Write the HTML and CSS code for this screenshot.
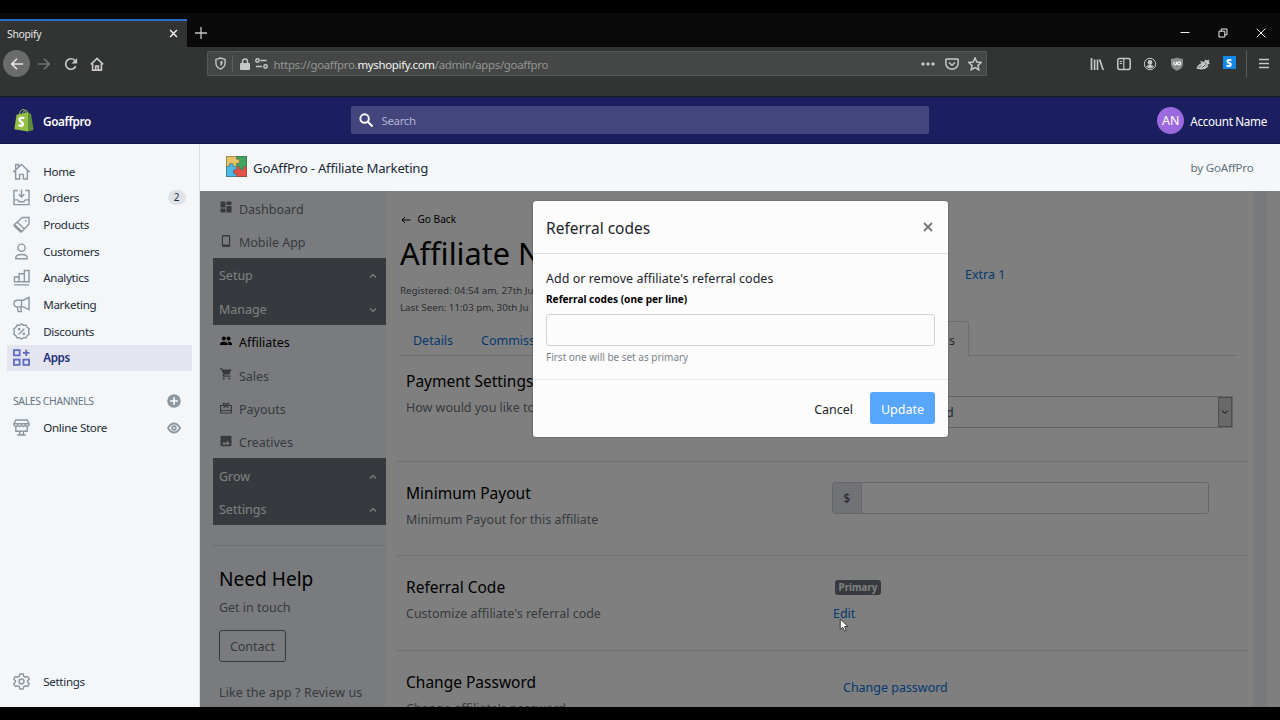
FILE: index.html
```html
<!DOCTYPE html>
<html lang="en">
<head>
<meta charset="utf-8">
<title>Shopify</title>
<link rel="stylesheet" href="styles.css">
</head>
<body>
<div class="screen">
  <div class="tabstrip">
    <div class="tab"><span>Shopify</span><svg class="tab-x" viewBox="0 0 10 10"><path d="M1.2 1.2l7.6 7.6M8.8 1.2L1.2 8.8"/></svg></div>
    <svg class="new-tab" viewBox="0 0 12 12"><path d="M6 0v12M0 6h12"/></svg>
    <div class="win-controls">
      <svg viewBox="0 0 10 10"><path d="M.5 4.500h9"/></svg>
      <svg viewBox="0 0 10 10"><path d="M1 3.2h5.8V9H1zM3.2 3V1H9v5.8H7"/></svg>
      <svg viewBox="0 0 10 10"><path d="M.7.7l8.6 8.6M9.3.7L.7 9.3"/></svg>
    </div>
  </div>

  <div class="toolbar">
    <div class="nav-buttons">
      <span class="back"><svg viewBox="0 0 16 16"><path d="M15 8H2M8 2L2 8l6 6"/></svg></span>
      <svg class="dim" viewBox="0 0 16 16"><path d="M1 8h13M8 2l6 6-6 6"/></svg>
      <svg viewBox="0 0 16 16"><path d="M13.4 10.4A6 6 0 1 1 12.4 4"/><path d="M15 1v6.5H8.5z" class="solid"/></svg>
      <svg viewBox="0 0 16 16"><path d="M1 8.5L8 1.5l7 7M3 7.5V15h10V7.500M6.500 15v-4.500h3V15"/></svg>
    </div>
    <div class="urlbar">
      <svg class="shield" viewBox="0 0 12 14"><path d="M6 1l5 1.600v3.500c0 3.500-2 5.800-5 7-3-1.200-5-3.500-5-7V2.600z"/><path d="M6 4v6c1.500-1 2.300-2.300 2.300-4.300V4.600z" class="solid"/></svg>
      <i></i>
      <svg class="lock" viewBox="0 0 10 12"><path d="M2.500 5.500V3.500a2.500 2.500 0 0 1 5 0v2"/><rect x="0" y="5" width="10" height="7" rx="1" class="solid"/></svg>
      <svg class="perm" viewBox="0 0 14 11"><circle cx="2.500" cy="2.500" r="1.700"/><path d="M5.500 2.500H11.500M1 8.500h6"/><circle cx="10.500" cy="8.500" r="1.700"/></svg>
      <span class="url">https://goaffpro.<b>myshopify.com</b>/admin/apps/goaffpro</span>
      <svg class="dots" viewBox="0 0 14 4"><circle cx="2" cy="2" r="1.700"/><circle cx="7" cy="2" r="1.700"/><circle cx="12" cy="2" r="1.700"/></svg>
      <svg class="pocket" viewBox="0 0 14 12"><path d="M1.500 1h11q.6 0 .6.700v4a6.100 5.500 0 0 1-12.200 0v-4q0-.7.6-.7z"/><path d="M4 4.500l3 2.800 3-2.800"/></svg>
      <svg class="star" viewBox="0 0 14 14"><path d="M7 1l1.800 4 4.300.500-3.200 2.900.900 4.300L7 10.500l-3.800 2.200.9-4.300L.9 5.500 5.200 5z"/></svg>
    </div>
    <div class="ext">
      <svg viewBox="0 0 14 14"><path d="M1.500 1v12M4.600 2.500v10.500M7.500 2.500v10.500M9.600 2.500l3.600 10.500" stroke-width="1.700"/></svg>
      <svg viewBox="0 0 14 14"><rect x=".8" y="1.600" width="12.400" height="10.800" rx="1.800" class="thick"/><path d="M6.800 2v10M2.800 4.500h2.200M2.800 6.500h2.200"/></svg>
      <svg viewBox="0 0 14 14"><circle cx="7" cy="7" r="5.700" stroke-width="1"/><circle cx="7" cy="5.500" r="2.400" class="solid"/><path d="M3 9.300q4-2.500 8 0-4 4.400-8 0z" class="solid"/></svg>
      <svg viewBox="0 0 14 14" class="ublock"><path d="M7 .5q3 1.500 6 1.300v4.700c0 4-3 6-6 7.200-3-1.200-6-3.200-6-7.200V1.800Q4 2 7 .5z"/><path d="M4 4.800v2q0 1.200 1.200 1.200t1.200-1.200v-2" class="mark"/><circle cx="9" cy="6.400" r="1.500" class="mark"/></svg>
      <svg viewBox="0 0 14 14"><path d="M.3 11.500q1.500-4 5.200-5.200L4 3.700l3.900 1.200 1.600-2.400 1.500 1 2.200-1-.3 2.500 1 1.600-2.500 1.200 1.200 1.700-3.600 2.500-4 .5z" class="solid"/><path d="M2.500 10.500l3-2M6 11l3.500-3.500M8.500 5.500l2 1.500M9.500 10l1.500-1.500" class="cut"/></svg>
      <span class="s-ext">S</span>
      <i></i>
      <svg viewBox="0 0 12 12"><path d="M1 1.500h10M1 5.500h10M1 9.500h10"/></svg>
    </div>
  </div>

  <header class="topbar">
    <div class="brand">
      <svg viewBox="0 0 20 24"><path d="M5 7Q6 1.500 9 1.400 11.500 1 12 6M8 7q1-4.500 3.500-5Q13.500 2 14 5.500" fill="none" stroke="#8fae6a" stroke-width="1"/><path d="M2.500 6.800L14 4.200V23.500L.3 21.300z" fill="#94be46"/><path d="M14 4.200l3 1.700 2.700 16L14 23.500z" fill="#5d8d3c"/><path d="M10.300 10.200q-4.600-1.300-4.800 1.600c0 2.200 3.700 2.100 3.500 4.400q-.5 2.600-4.500.8" fill="none" stroke="#fff" stroke-width="2.300"/></svg>
      <span>Goaffpro</span>
    </div>
    <div class="search"><svg viewBox="0 0 14 14"><circle cx="5.400" cy="5.400" r="4.100"/><path d="M8.500 8.500l4.600 4.600"/></svg><span>Search</span></div>
    <div class="account"><b>AN</b><span>Account Name</span></div>
  </header>

  <div class="workspace">
    <aside class="sidebar">
      <a><svg viewBox="0 0 18 18"><path d="M1 9l8-7.500L17 9h-1.800v8H11v-5H7v5H2.800V9zM2.800 6.500V1.500h3v2.500"/></svg>Home</a>
      <a><svg viewBox="0 0 18 18"><path d="M5 1.500H1v15h16v-15h-4M1 11.500h4l1.500 2h5l1.500-2h4M9 .5v7.500M6 5.500l3 3 3-3"/></svg>Orders<em>2</em></a>
      <a><svg viewBox="0 0 18 18"><path d="M10 1.500h7v7l-7.500 8L1.500 9zM1.500 9l-.3 1.500 7.500 7M4.200 6.200l7.800 7.500"/><circle cx="13.500" cy="5" r=".3"/></svg>Products</a>
      <a><svg viewBox="0 0 18 18"><circle cx="9" cy="5" r="3.800"/><path d="M3 16.700q-.8-4.500 6-4.500t6 4.500z"/></svg>Customers</a>
      <a><svg viewBox="0 0 18 18"><path d="M1.500 13.500v-5h5v5zM6.500 13.500V5H12v8.500zM12 13.500v-12h5v12zM1 16.800h16"/></svg>Analytics</a>
      <a><svg viewBox="0 0 18 18"><path d="M17 1.500v13l-6-3H4.500a3.500 3.500 0 0 1 0-7H11zM9 4.500v7M4.500 11.500l1 5H9l-1-5"/></svg>Marketing</a>
      <a><svg viewBox="0 0 18 18"><path d="M9 1l2.200 1.400 2.600-.1 1.200 2.300 2.100 1.600-.6 2.800.6 2.800-2.100 1.600-1.200 2.300-2.600-.1L9 17l-2.200-1.400-2.600.1L3 13.400.9 11.800 1.500 9 .9 6.200 3 4.600l1.200-2.300 2.600.1zM6 12l6-6"/><circle cx="6.500" cy="6.500" r=".7"/><circle cx="11.500" cy="11.500" r=".7"/></svg>Discounts</a>
      <a class="active"><svg viewBox="0 0 18 18"><path d="M1 1.200h6v5.600H1zM1 11.200h6v5.600H1zM11 11.200h6v5.600h-6zM14 .800v6.700M10.500 4.200h7"/></svg>Apps</a>
      <div class="group"><span>SALES CHANNELS</span><svg viewBox="0 0 14 14"><circle cx="7" cy="7" r="6.800" fill="#8c979f"/><path d="M7 3.200v7.600M3.200 7h7.600" stroke="#fff" stroke-width="1.600"/></svg></div>
      <a><svg viewBox="0 0 18 18"><path d="M3 1h12l2 4v1.500q-2 3-4 0-2 3-4 0-2 3-4 0-2 3-4 0V5zM1 5h16M3 8.500V13h12V8.500M7 13v3.500M11 13v3.500M4.500 17h9"/></svg>Online Store<svg class="eye" viewBox="0 0 14 12"><path d="M1 6q2.500-4.500 6-4.500T13 6q-2.500 4.500-6 4.500T1 6z"/><circle cx="7" cy="6" r="1.800"/></svg></a>
      <a class="bottom"><svg viewBox="0 0 18 18"><path d="M7.300 1h3.400l.6 2.400 1.800 1 2.400-.7 1.700 2.900L15.500 8.300v1.400l1.700 1.700-1.700 2.900-2.400-.7-1.800 1-.6 2.400H7.300l-.6-2.400-1.800-1-2.400.7-1.700-2.900 1.700-1.700V8.300L.8 6.600l1.700-2.900 2.400.7 1.800-1z"/><circle cx="9" cy="9" r="2.600"/></svg>Settings</a>
    </aside>

    <main class="main">
      <div class="app-title">
        <svg viewBox="0 0 20 20"><path d="M0 0h10v10H0z" fill="#e8c468"/><path d="M10 0h10v10H10z" fill="#3fa55c"/><path d="M0 10h10v10H0z" fill="#4bb9e8"/><path d="M10 10h10v10H10z" fill="#e25347"/><circle cx="11" cy="5" r="2.200" fill="#e8c468"/><circle cx="5" cy="9" r="2.200" fill="#4bb9e8"/><circle cx="9" cy="15" r="2.200" fill="#e25347"/><circle cx="15" cy="11" r="2.200" fill="#3fa55c"/><path d="M.4.4h19.200v19.200H.4zM10 0v3q3-.5 3 2t-3 2v3H7q.5-3-2-3t-2 3H0M10 10h3q-.500 3 2 3t2-3h3M10 10v3q-3-.5-3 2t3 2v3" fill="none" stroke="#4b4a3e" stroke-width=".5"/></svg>
        <h2>GoAffPro - Affiliate Marketing</h2><span>by GoAffPro</span>
      </div>

      <div class="frame">
        <nav class="app-nav">
          <a><svg viewBox="0 0 12 12"><path d="M.5.500h5v6h-5zM6.500.500h5v3.500h-5zM.5 7.500h5v4h-5zM6.500 5h5v6.500h-5z"/></svg>Dashboard</a>
          <a><svg viewBox="0 0 12 12"><path d="M3 0h6q1.200 0 1.200 1.200v9.600Q10.200 12 9 12H3q-1.200 0-1.200-1.200V1.200Q1.800 0 3 0zM3 1.500v8h6v-8z" fill-rule="evenodd"/></svg>Mobile App</a>
          <a class="sect">Setup<svg viewBox="0 0 8 8"><path d="M1 5.500l3-3 3 3"/></svg></a>
          <a class="sect">Manage<svg viewBox="0 0 8 8"><path d="M1 2.500l3 3 3-3"/></svg></a>
          <a class="on"><svg viewBox="0 0 12 12"><circle cx="3.800" cy="3.600" r="2"/><circle cx="8.500" cy="3.600" r="2"/><path d="M0 10V8.500Q1.500 6.500 4 6.500t3.800 2V10zM8.500 10V8.500q0-1-.8-1.900 3.300-.2 4.300 1.900V10z"/></svg>Affiliates</a>
          <a><svg viewBox="0 0 12 12"><path d="M0 .3h2l.6 1.300H11.500L9.400 6.500H4.600L4 7.500h6.500v1.200H3Q2 8 2.700 7l.6-1.100L1.200 1.500H0z"/><circle cx="3.800" cy="10.500" r="1.100"/><circle cx="9.300" cy="10.500" r="1.100"/></svg>Sales</a>
          <a><svg viewBox="0 0 12 12"><path d="M.6 3.500h10.800v7.500H.6zM.6 8.500h10.800M6 3.500L3.500 6M6 3.500L8.500 6M6 3.500C5 .3 2.800.5 3.300 3.300M6 3.500C7 .3 9.200.5 8.700 3.300" fill="none" stroke="currentColor" stroke-width="1.200"/></svg>Payouts</a>
          <a><svg viewBox="0 0 12 12"><path d="M1.500.800h9q1 0 1 1v8.400q0 1-1 1h-9q-1 0-1-1V1.800q0-1 1-1zM2 9.500h8.200L7.500 5.800 5.400 8.400 4 6.800z" fill-rule="evenodd"/></svg>Creatives</a>
          <a class="sect">Grow<svg viewBox="0 0 8 8"><path d="M1 5.500l3-3 3 3"/></svg></a>
          <a class="sect">Settings<svg viewBox="0 0 8 8"><path d="M1 5.500l3-3 3 3"/></svg></a>
          <div class="help">
            <h3>Need Help</h3>
            <p>Get in touch</p>
            <button>Contact</button>
            <p class="review">Like the app ? Review us</p>
          </div>
        </nav>

        <section class="content">
          <div class="page-head">
            <div>
              <div class="go-back"><svg viewBox="0 0 10 8"><path d="M9.500 4H1M4 1L1 4l3 3"/></svg>Go Back</div>
              <h1>Affiliate N</h1>
              <small>Registered: 04:54 am, 27th Ju</small>
              <small>Last Seen: 11:03 pm, 30th Ju</small>
            </div>
            <a>Extra 1</a>
          </div>
          <div class="tabs"><a>Details</a><a>Commiss</a><span class="current">s</span></div>
          <div class="row payment">
            <div><h4>Payment Settings</h4><p>How would you like to</p></div>
            <div class="select"><span>d</span><i><svg viewBox="0 0 8 8"><path d="M1 2.500l3 3 3-3"/></svg></i></div>
          </div>
          <div class="row">
            <div><h4>Minimum Payout</h4><p>Minimum Payout for this affiliate</p></div>
            <div class="money"><span>$</span></div>
          </div>
          <div class="row">
            <div><h4>Referral Code</h4><p>Customize affiliate's referral code</p></div>
            <div class="code"><b>Primary</b><a>Edit</a></div>
          </div>
          <div class="row">
            <div><h4>Change Password</h4><p>Change affiliate's password</p></div>
            <div class="pass"><a>Change password</a></div>
          </div>
        </section>
        <div class="gutter"></div>

        <div class="overlay">
          <div class="modal">
            <div class="modal-head"><span>Referral codes</span><svg viewBox="0 0 10 10"><path d="M1 1l8 8M9 1L1 9"/></svg></div>
            <div class="modal-body">
              <p>Add or remove affiliate's referral codes</p>
              <label>Referral codes (one per line)</label>
              <div class="field"></div>
              <small>First one will be set as primary</small>
            </div>
            <div class="modal-foot"><span>Cancel</span><button>Update</button></div>
          </div>
        </div>
      </div>
    </main>
  </div>
  <svg class="cursor" viewBox="0 0 10 14"><path d="M1 1v10.500l2.500-2.300L5.200 13l1.700-.8L5.300 8.500h3.400z"/></svg>
</div>
</body>
</html>
```
FILE: styles.css
```css
* { box-sizing: border-box; }
body { margin: 0; background: #000; font-family: "Noto Sans", "Open Sans", sans-serif; }
h1, h2, h3, h4, p { margin: 0; font-weight: 400; }
svg { display: block; flex: none; fill: none; }
button { font-family: inherit; padding: 0; }
.screen { position: relative; display: flex; flex-direction: column; width: 1280px; height: 720px; padding: 13px 0; overflow: hidden; }

/* Browser chrome */
.tabstrip { display: flex; align-items: flex-end; height: 34px; flex: none; background: #0a0a0a; }
.tab { display: flex; align-items: center; justify-content: space-between; width: 187px; height: 28px; padding: 0 9.500px 0 7px; background: #323433; border-top: 2px solid #2b6fca; color: #e8e8e8; font-size: 10.300px; letter-spacing: -.25px; }
.tab-x { width: 9px; height: 9px; margin-top: -1px; stroke: #f4f4f4; stroke-width: 1.600; }
.new-tab { width: 12px; height: 12px; margin: 0 0 8.500px 8px; stroke: #c4c4c4; stroke-width: 1.300; }
.win-controls { display: flex; gap: 28px; margin: 0 14px 9px auto; }
.win-controls svg { width: 10px; height: 10px; stroke: #eee; stroke-width: 1; }
.toolbar { display: flex; height: 50px; flex: none; background: #323433; border-bottom: 1px solid #151723; padding-top: 4px; }
.toolbar svg { stroke: #c6c7c7; stroke-width: 1.500; }
.toolbar .solid { fill: #c6c7c7; stroke: none; }
.nav-buttons { display: flex; align-items: center; width: 207px; height: 25px; padding-left: 3px; gap: 12.300px; }
.nav-buttons svg { width: 14px; height: 14px; stroke-width: 1.900; }
.nav-buttons .dim { stroke: #747676; margin-left: -5px; }
.back { display: grid; place-items: center; width: 27px; height: 27px; border-radius: 50%; background: #6a6b6b; }
.back svg { stroke: #e6e6e6; }
.urlbar { display: flex; align-items: center; width: 780px; height: 25px; background: #454746; border: 1px solid #575958; padding: 0 4px 0 6.500px; border-radius: 1px; }
.urlbar i { width: 1px; height: 17px; margin: 0 7px 0 6px; background: #5d5f5e; }
.shield { width: 11px; height: 13px; }
.lock { width: 10px; height: 12px; }
.perm { width: 14px; height: 11px; margin: 0 5px 0 5px; }
.url { flex: 1; color: #939594; font-size: 11.400px; letter-spacing: -.29px; padding-top: 1px; }
.url b { font-weight: 400; color: #f3f3f3; }
.dots { width: 14px; height: 4px; margin-right: 10px; }
.toolbar .dots { fill: #c6c7c7; stroke: none; }
.pocket { width: 14px; height: 12px; margin-right: 9px; }
.star { width: 14px; height: 14px; }
.ext { display: flex; align-items: center; height: 25px; margin-left: 103px; gap: 12.500px; }
.ext svg { width: 14px; height: 14px; stroke-width: 1.200; }
.ext .thick { stroke-width: 1.500; }
.ext svg:last-child { width: 12px; height: 12px; stroke-width: 1.500; margin-left: -.5px; }
.ext .ublock { fill: #8d8f8f; stroke: none; }
.ext .mark { fill: none; stroke: #fff; stroke-width: 1.100; }
.ext .cut { stroke: #454746; stroke-width: .8; }
.ext i { width: 1px; height: 28px; background: #5b5d5c; margin: 0 -1px 0 -2px; }
.s-ext { display: grid; place-items: center; width: 13px; height: 13px; background: #1288ea; color: #fff; font-weight: 900; font-size: 10px; line-height: 12px; margin-top: -2px; }

/* Admin header */
.topbar { display: flex; align-items: center; height: 46.500px; flex: none; background: #1c1f5f; color: #fff; border-bottom: 1px solid #15184b; }
.brand { display: flex; align-items: center; width: 351px; padding-left: 14px; gap: 9px; font-size: 11.800px; font-weight: 600; letter-spacing: -.4px; padding-top: 1px; }
.brand svg { width: 20px; height: 24px; margin-top: -1px; }
.brand span { padding-top: 1.500px; }
.search { display: flex; align-items: center; width: 578px; height: 28px; padding-left: 8px; gap: 8px; background: #43457c; border-radius: 2px; color: #b0b1d2; font-size: 11.500px; letter-spacing: -.35px; margin-top: 1px; }
.search svg { width: 14.500px; height: 14.500px; stroke: #fff; stroke-width: 1.900; }
.search span { padding-top: 1px; }
.account { display: flex; align-items: center; margin-left: auto; padding-right: 13px; gap: 6px; font-size: 11.700px; letter-spacing: -.31px; }
.account span { padding-top: 2px; }
.account b { display: grid; place-items: center; width: 27px; height: 27px; border-radius: 50%; background: #9c6ade; font-size: 12.500px; font-weight: 400; letter-spacing: 0; margin-top: 1px; }

/* Admin sidebar */
.workspace { display: flex; flex: 1; min-height: 0; }
.sidebar { display: flex; flex-direction: column; width: 200px; padding: 14.200px 7px 12.500px; background: #f4f7fa; border-right: 1px solid #dce0e5; color: #212b36; font-size: 11.600px; letter-spacing: -.31px; }
.sidebar a { display: flex; align-items: center; height: 26.700px; flex: none; padding: 0 0 0 6px; }
.sidebar a > svg:first-child { width: 17px; height: 17px; margin: 0 13.200px 0 0; stroke: #8c979f; stroke-width: 1.500; }
.sidebar em { margin: 0 6.500px 0 auto; width: 18px; height: 15px; border-radius: 8px; background: #dfe3e8; font: inherit; font-size: 10px; line-height: 15px; text-align: center; letter-spacing: 0; }
.sidebar .active { background: #e3e5f1; color: #202e78; font-weight: 600; }
.sidebar .active > svg:first-child { stroke: #5c6ac4; stroke-width: 1.900; }
.group { display: flex; justify-content: space-between; align-items: center; height: 26px; margin-top: 17px; padding: 0 11px 0 6px; color: #637381; font-size: 10.400px; letter-spacing: -.35px; }
.group svg { width: 14px; height: 14px; }
.sidebar .eye { width: 14px; height: 12px; margin: 0 11px 0 auto; stroke: #8c979f; stroke-width: 1.800; }
.sidebar .bottom { margin-top: auto; }

/* Embedded app */
.main { display: flex; flex-direction: column; width: 1080px; }
.app-title { display: flex; align-items: center; height: 47.500px; flex: none; padding: 0 26.500px 0 26px; gap: 6px; background: #f5f8fb; color: #212b36; }
.app-title svg { width: 21px; height: 21px; margin-top: -1px; }
.app-title h2 { font-size: 13.200px; letter-spacing: -.22px; padding-top: 2px; }
.app-title span { margin-left: auto; color: #5f707c; font-size: 11.600px; letter-spacing: -.2px; padding-top: 1px; }
.frame { position: relative; display: flex; flex: 1; min-height: 0; overflow: hidden; background: #fff; font-size: 12.480px; }
.app-nav { width: 186px; padding-left: 12.500px; background: #f5f7fd; color: #6c757d; }
.app-nav a { display: flex; align-items: center; height: 33.400px; padding: 3px 0 0 7.500px; }
.app-nav a svg { width: 12px; height: 12px; margin: -4px 7px 0 0; fill: currentColor; }
.app-nav .on { color: #000; }
.app-nav .sect { justify-content: space-between; padding-left: 6.500px; background: #6c757d; color: #fff; }
.app-nav .sect svg { width: 8px; height: 8px; margin: 1px 9.500px 0 0; fill: none; stroke: #fff; stroke-width: 1.200; }
.help { margin-top: 20px; padding: 18px 0 0 6.500px; border-top: 1px solid #dbe0e6; }
.help h3 { color: #000; font-size: 19.100px; line-height: 30px; }
.help p { line-height: 20px; margin-top: 4px; }
.help button { display: block; width: 67px; height: 32px; margin-top: 12px; padding-top: 1px; border: 1px solid #6c757d; border-radius: 3px; background: none; color: #6c757d; font-size: 12.500px; }
.help .review { margin-top: 21px; letter-spacing: .1px; }
.content { width: 868px; padding: 0 6px 0 10px; color: #000; }
.content a { color: #0872e0; }
.page-head { display: flex; height: 130px; padding: 18px 0 0 4px; }
.page-head > div { width: 565px; }
.page-head > a { padding-top: 57px; }
.go-back { display: flex; align-items: center; gap: 6.500px; padding: 0 0 0 1px; height: 20px; font-size: 10.100px; }
.go-back svg { width: 10px; height: 8px; margin-top: 1px; stroke: #000; stroke-width: 1; }
.content h1 { height: 53px; font-size: 30.700px; line-height: 48px; }
.content small { display: block; height: 16.700px; line-height: 17px; color: #555c62; font-size: 9.800px; letter-spacing: -.02px; }
.tabs { display: flex; height: 35px; margin: 0 10px 0 4px; border-bottom: 1px solid #d8dce0; line-height: 39px; }
.tabs a { margin-left: 13px; margin-right: 15px; }
.current { width: 75px; height: 35px; margin-left: auto; margin-right: 269px; padding-right: 13px; text-align: right; border: 1px solid #d8dce0; border-bottom-color: #fff; border-radius: 3px 3px 0 0; color: #495057; line-height: 37px; }
.row { display: flex; height: 94.300px; padding: 17px 0 0 10px; border-top: 1px solid #e2e4e7; }
.row > div:first-child { width: 426px; }
.row h4 { font-size: 15.500px; line-height: 28px; }
.row p { color: #6c757d; line-height: 24px; margin-top: 1px; }
.payment { height: 105px; padding-top: 11px; border: 0; }
.select { display: flex; justify-content: space-between; width: 401px; height: 32px; margin-top: 29px; border: 1px solid #c3c8cd; line-height: 31px; color: #495057; }
.select span { padding-left: 113px; }
.select i { display: grid; place-items: center; width: 14px; background: #d2d2d2; border: 1px solid #999; }
.select svg { width: 8px; height: 8px; stroke: #222; stroke-width: 1; }
.money { width: 377px; height: 32px; margin-top: 2.500px; border: 1px solid #c9ced3; border-radius: 3px; color: #495057; }
.money span { display: block; width: 28.500px; height: 30px; line-height: 31px; text-align: center; background: #e0e5ec; border-right: 1px solid #c9ced3; }
.code b { display: block; width: 46px; height: 15px; margin: 7px 0 0 3px; border-radius: 3px; background: #6c757d; color: #fff; font-size: 9.800px; line-height: 15px; text-align: center; }
.code a { display: block; margin: 9.500px 0 0 1px; line-height: 18px; }
.pass { padding: 11px 0 0 11px; }
.gutter { width: 13px; background: #eff2fa; }

/* Dialog */
.overlay { position: absolute; inset: 0; background: rgba(0, 0, 0, .5); }
.modal { position: absolute; left: 333px; top: 10px; width: 415px; height: 236px; display: flex; flex-direction: column; background: #fcfcfd; border-radius: 3px; box-shadow: 0 0 2px rgba(0, 0, 0, .45); color: #212529; }
.modal-head { display: flex; align-items: center; justify-content: space-between; height: 52.500px; padding: 3px 15.500px 0 13px; border-bottom: 1px solid #dee2e6; font-size: 15.500px; }
.modal-head svg { width: 10px; height: 10px; margin-top: -3px; stroke: #777; stroke-width: 1.900; }
.modal-body { display: flex; flex-direction: column; height: 126px; padding: 14px 13px 0; border-bottom: 1px solid #e7eaec; }
.modal-body p { line-height: 22px; letter-spacing: .03px; }
.modal-body label { color: #000; font-size: 10.100px; font-weight: 700; line-height: 19px; }
.field { height: 32px; margin-top: 5px; border: 1px solid #ced4da; border-radius: 3px; }
.modal-body small { color: #7b838a; font-size: 9.980px; line-height: 23px; }
.modal-foot { display: flex; align-items: center; justify-content: flex-end; flex: 1; padding-right: 13px; gap: 17px; }
.modal-foot button { width: 65px; height: 32px; border: 0; border-radius: 3px; background: #58a6fb; color: #fff; font-size: 12.500px; padding-top: 2px; }
.modal-foot span { padding-top: 3px; }
.cursor { position: absolute; left: 839px; top: 617.500px; width: 10.500px; height: 14px; fill: #fff; stroke: #222; stroke-width: .8; }
```
